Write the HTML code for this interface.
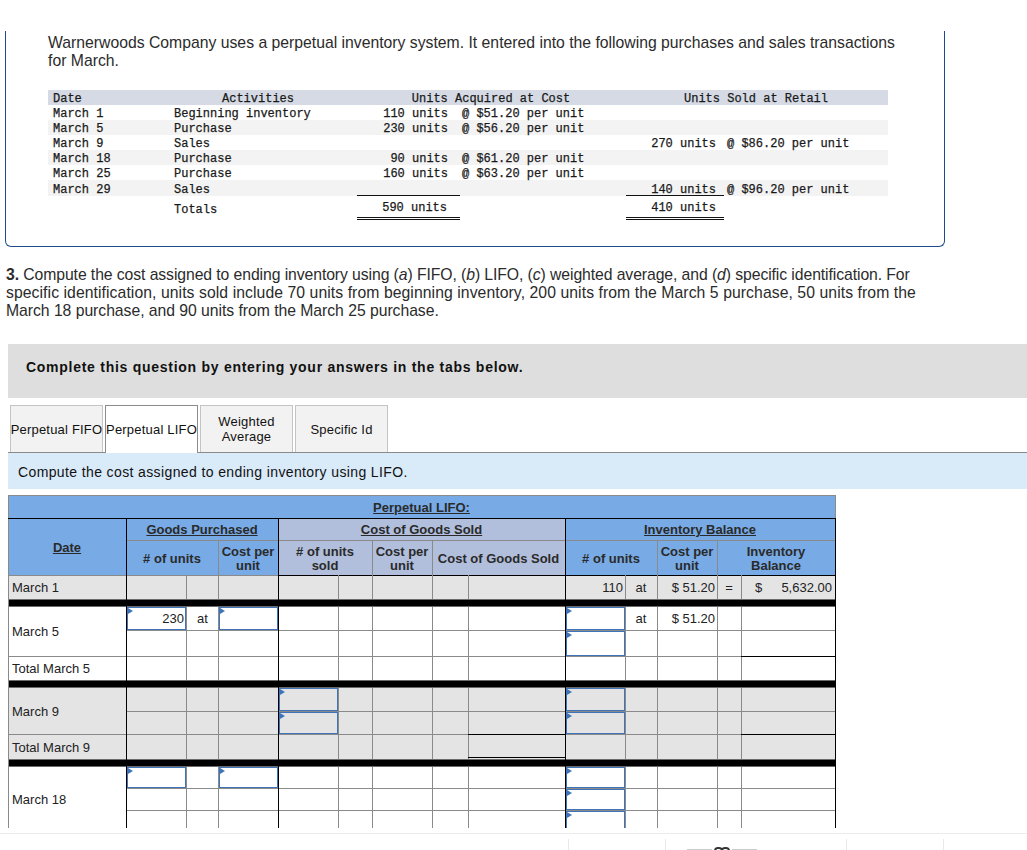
<!DOCTYPE html>
<html><head><meta charset="utf-8"><style>
*{margin:0;padding:0;box-sizing:border-box}
html,body{width:1027px;height:850px;overflow:hidden;background:#fff}
body{position:relative}
div,span{position:absolute}
span{white-space:nowrap}
.p{font-family:"Liberation Sans",sans-serif;font-size:15.75px;line-height:18px;color:#2b2b2b}
.m{font-family:"Liberation Mono",monospace;font-size:12px;line-height:15px;color:#1a1a1a;-webkit-text-stroke:0.25px #1a1a1a}
.b{font-family:"Liberation Sans",sans-serif;font-size:14px;font-weight:bold;letter-spacing:0.73px;color:#111}
.tab{font-family:"Liberation Sans",sans-serif;font-size:13px;letter-spacing:0.2px;line-height:15px;color:#111;text-align:center}
.ins{font-family:"Liberation Sans",sans-serif;font-size:14px;letter-spacing:0.38px;color:#111}
.th{font-family:"Liberation Sans",sans-serif;font-size:13px;font-weight:bold;line-height:14px;color:#2a2a2a;text-align:center}
.u{text-decoration:underline}
.td{font-family:"Liberation Sans",sans-serif;font-size:13px;line-height:15px;color:#222}
</style></head>
<body>
<div style="left:5px;top:31px;width:940px;height:216px;border:1px solid #1d4b8b;border-top:none;border-radius:0 0 6px 6px"></div>
<span class="p" style="left:48px;top:33.5px;">Warnerwoods Company uses a perpetual inventory system. It entered into the following purchases and sales transactions</span>
<span class="p" style="left:48px;top:51.5px;">for March.</span>
<div style="left:48px;top:90px;width:840px;height:15px;background:#d5dae5"></div>
<div style="left:48px;top:120px;width:840px;height:15px;background:#f3f3f3"></div>
<div style="left:48px;top:150px;width:840px;height:15px;background:#f3f3f3"></div>
<div style="left:48px;top:180px;width:840px;height:16px;background:#f3f3f3"></div>
<span class="m" style="left:53px;top:92px">Date</span>
<span class="m" style="left:158px;top:92px;width:200px;text-align:center">Activities</span>
<span class="m" style="left:371px;top:92px;width:240px;text-align:center">Units Acquired at Cost</span>
<span class="m" style="left:636px;top:92px;width:240px;text-align:center">Units Sold at Retail</span>
<span class="m" style="left:53px;top:107px">March 1</span>
<span class="m" style="left:174px;top:107px">Beginning inventory</span>
<span class="m" style="left:348px;top:107px;width:100px;text-align:right">110 units</span>
<span class="m" style="left:462px;top:107px">@ $51.20 per unit</span>
<span class="m" style="left:53px;top:122px">March 5</span>
<span class="m" style="left:174px;top:122px">Purchase</span>
<span class="m" style="left:348px;top:122px;width:100px;text-align:right">230 units</span>
<span class="m" style="left:462px;top:122px">@ $56.20 per unit</span>
<span class="m" style="left:53px;top:137px">March 9</span>
<span class="m" style="left:174px;top:137px">Sales</span>
<span class="m" style="left:616px;top:137px;width:100px;text-align:right">270 units</span>
<span class="m" style="left:727px;top:137px">@ $86.20 per unit</span>
<span class="m" style="left:53px;top:152px">March 18</span>
<span class="m" style="left:174px;top:152px">Purchase</span>
<span class="m" style="left:348px;top:152px;width:100px;text-align:right">90 units</span>
<span class="m" style="left:462px;top:152px">@ $61.20 per unit</span>
<span class="m" style="left:53px;top:167px">March 25</span>
<span class="m" style="left:174px;top:167px">Purchase</span>
<span class="m" style="left:348px;top:167px;width:100px;text-align:right">160 units</span>
<span class="m" style="left:462px;top:167px">@ $63.20 per unit</span>
<span class="m" style="left:53px;top:183px">March 29</span>
<span class="m" style="left:174px;top:183px">Sales</span>
<span class="m" style="left:616px;top:183px;width:100px;text-align:right">140 units</span>
<span class="m" style="left:727px;top:183px">@ $96.20 per unit</span>
<span class="m" style="left:174px;top:203px">Totals</span>
<span class="m" style="left:347px;top:201px;width:100px;text-align:right">590 units</span>
<span class="m" style="left:616px;top:201px;width:100px;text-align:right">410 units</span>
<div style="left:357px;top:195px;width:103px;height:1px;background:#111"></div>
<div style="left:357px;top:217px;width:103px;height:1px;background:#111"></div>
<div style="left:357px;top:219px;width:103px;height:1px;background:#111"></div>
<div style="left:626px;top:195px;width:98px;height:1px;background:#111"></div>
<div style="left:626px;top:217px;width:98px;height:1px;background:#111"></div>
<div style="left:626px;top:219px;width:98px;height:1px;background:#111"></div>
<span class="p" style="left:6px;top:266px;letter-spacing:-0.084px"><b>3.</b> Compute the cost assigned to ending inventory using (<i>a</i>) FIFO, (<i>b</i>) LIFO, (<i>c</i>) weighted average, and (<i>d</i>) specific identification. For</span>
<span class="p" style="left:6px;top:284px;letter-spacing:0.07px">specific identification, units sold include 70 units from beginning inventory, 200 units from the March 5 purchase, 50 units from the</span>
<span class="p" style="left:6px;top:302px;letter-spacing:-0.04px">March 18 purchase, and 90 units from the March 25 purchase.</span>
<div style="left:8px;top:344px;width:1019px;height:54px;background:#dedede"></div>
<span class="b" style="left:26px;top:359px;">Complete this question by entering your answers in the tabs below.</span>
<div style="left:8px;top:452px;width:1020px;height:1px;background:#8a8a8a"></div>
<div style="left:10px;top:405px;width:93px;height:47px;background:#f2f2f2;border:1px solid #c4c4c4;border-bottom:none"></div>
<span class="tab" style="left:10px;top:422px;width:93px">Perpetual FIFO</span>
<div style="left:105px;top:405px;width:93px;height:49px;background:#fff;border:1px solid #8c8c8c;border-bottom:none"></div>
<span class="tab" style="left:105px;top:422px;width:93px">Perpetual LIFO</span>
<div style="left:200px;top:405px;width:93px;height:47px;background:#f2f2f2;border:1px solid #c4c4c4;border-bottom:none"></div>
<span class="tab" style="left:200px;top:413.5px;width:93px">Weighted<br>Average</span>
<div style="left:295px;top:405px;width:93px;height:47px;background:#f2f2f2;border:1px solid #c4c4c4;border-bottom:none"></div>
<span class="tab" style="left:295px;top:422px;width:93px">Specific Id</span>
<div style="left:8px;top:453px;width:1019px;height:36px;background:#d9eaf9"></div>
<span class="ins" style="left:18px;top:464px;">Compute the cost assigned to ending inventory using LIFO.</span>
<div style="left:8px;top:495px;width:827px;height:23px;background:#78aae6"></div>
<div style="left:8px;top:518px;width:270px;height:57px;background:#78aae6"></div>
<div style="left:278px;top:518px;width:287px;height:57px;background:#b1bfdc"></div>
<div style="left:565px;top:518px;width:270px;height:57px;background:#78aae6"></div>
<div style="left:8px;top:575px;width:827px;height:24px;background:#e4e4e4"></div>
<div style="left:8px;top:606px;width:827px;height:74px;background:#fff"></div>
<div style="left:8px;top:687px;width:827px;height:72px;background:#e4e4e4"></div>
<div style="left:8px;top:766px;width:827px;height:62px;background:#fff"></div>
<div style="left:8px;top:495px;width:828px;height:1px;background:#8a8a8a"></div>
<div style="left:8px;top:495px;width:1px;height:334px;background:#8a8a8a"></div>
<div style="left:835px;top:495px;width:1px;height:24px;background:#8a8a8a"></div>
<div style="left:835px;top:518px;width:1px;height:311px;background:#000"></div>
<div style="left:8px;top:518px;width:828px;height:1px;background:#000"></div>
<div style="left:126px;top:540px;width:710px;height:1px;background:#8a8a8a"></div>
<div style="left:8px;top:575px;width:271px;height:1px;background:#8a8a8a"></div>
<div style="left:278px;top:575px;width:558px;height:1px;background:#000"></div>
<div style="left:126px;top:518px;width:1px;height:311px;background:#000"></div>
<div style="left:278px;top:518px;width:1px;height:311px;background:#000"></div>
<div style="left:565px;top:518px;width:1px;height:311px;background:#000"></div>
<div style="left:218px;top:540px;width:1px;height:36px;background:#8a8a8a"></div>
<div style="left:372px;top:540px;width:1px;height:36px;background:#8a8a8a"></div>
<div style="left:432px;top:540px;width:1px;height:36px;background:#8a8a8a"></div>
<div style="left:657px;top:540px;width:1px;height:36px;background:#8a8a8a"></div>
<div style="left:717px;top:540px;width:1px;height:36px;background:#8a8a8a"></div>
<div style="left:186px;top:575px;width:1px;height:254px;background:#8a8a8a"></div>
<div style="left:218px;top:575px;width:1px;height:254px;background:#8a8a8a"></div>
<div style="left:338px;top:575px;width:1px;height:254px;background:#8a8a8a"></div>
<div style="left:372px;top:575px;width:1px;height:254px;background:#8a8a8a"></div>
<div style="left:432px;top:575px;width:1px;height:254px;background:#8a8a8a"></div>
<div style="left:468px;top:575px;width:1px;height:254px;background:#8a8a8a"></div>
<div style="left:625px;top:575px;width:1px;height:254px;background:#8a8a8a"></div>
<div style="left:657px;top:575px;width:1px;height:254px;background:#8a8a8a"></div>
<div style="left:717px;top:575px;width:1px;height:254px;background:#8a8a8a"></div>
<div style="left:741px;top:575px;width:1px;height:254px;background:#8a8a8a"></div>
<div style="left:9px;top:599px;width:827px;height:8px;background:#6a6a6a"></div>
<div style="left:9px;top:600px;width:827px;height:6px;background:#000"></div>
<div style="left:9px;top:680px;width:827px;height:8px;background:#6a6a6a"></div>
<div style="left:9px;top:681px;width:827px;height:6px;background:#000"></div>
<div style="left:9px;top:759px;width:827px;height:8px;background:#6a6a6a"></div>
<div style="left:9px;top:760px;width:827px;height:6px;background:#000"></div>
<div style="left:126px;top:630px;width:710px;height:1px;background:#8a8a8a"></div>
<div style="left:126px;top:711px;width:710px;height:1px;background:#8a8a8a"></div>
<div style="left:126px;top:788px;width:710px;height:1px;background:#8a8a8a"></div>
<div style="left:126px;top:810px;width:710px;height:1px;background:#8a8a8a"></div>
<div style="left:8px;top:656px;width:828px;height:1px;background:#8a8a8a"></div>
<div style="left:8px;top:734px;width:828px;height:1px;background:#8a8a8a"></div>
<div style="left:741px;top:656px;width:95px;height:1px;background:#000"></div>
<div style="left:741px;top:734px;width:95px;height:1px;background:#000"></div>
<div style="left:468px;top:734px;width:98px;height:1px;background:#000"></div>
<div style="left:468px;top:757px;width:98px;height:1px;background:#000"></div>
<div style="left:126px;top:518px;width:1px;height:311px;background:#000"></div>
<div style="left:278px;top:518px;width:1px;height:311px;background:#000"></div>
<div style="left:565px;top:518px;width:1px;height:311px;background:#000"></div>
<div style="left:835px;top:518px;width:1px;height:311px;background:#000"></div>
<span class="th u" style="left:8px;top:501px;width:827px;padding-left:0">Perpetual LIFO:</span>
<span class="th u" style="left:8px;top:541px;width:118px">Date</span>
<span class="th u" style="left:126px;top:523px;width:152px">Goods Purchased</span>
<span class="th u" style="left:278px;top:523px;width:287px">Cost of Goods Sold</span>
<span class="th u" style="left:565px;top:523px;width:270px">Inventory Balance</span>
<span class="th" style="left:126px;top:552px;width:92px"># of units</span>
<span class="th" style="left:218px;top:544.5px;width:60px">Cost per<br>unit</span>
<span class="th" style="left:278px;top:544.5px;width:94px"># of units<br>sold</span>
<span class="th" style="left:372px;top:544.5px;width:60px">Cost per<br>unit</span>
<span class="th" style="left:432px;top:552px;width:133px">Cost of Goods Sold</span>
<span class="th" style="left:565px;top:552px;width:92px"># of units</span>
<span class="th" style="left:657px;top:544.5px;width:60px">Cost per<br>unit</span>
<span class="th" style="left:717px;top:544.5px;width:118px">Inventory<br>Balance</span>
<span class="td" style="left:12px;top:580px;">March 1</span>
<span class="td" style="left:12px;top:624px;">March 5</span>
<span class="td" style="left:12px;top:661px;">Total March 5</span>
<span class="td" style="left:12px;top:704px;">March 9</span>
<span class="td" style="left:12px;top:740px;">Total March 9</span>
<span class="td" style="left:12px;top:792px;">March 18</span>
<div style="left:127px;top:607px;width:59px;height:23px;border:1px solid #3f75b8;background:transparent"></div>
<div style="left:128px;top:608px;width:0;height:0;border-top:3.5px solid transparent;border-bottom:3.5px solid transparent;border-left:5.5px solid #3f75b8"></div>
<span class="td" style="left:127px;top:611px;width:57px;text-align:right">230</span>
<div style="left:219px;top:607px;width:59px;height:23px;border:1px solid #3f75b8;background:transparent"></div>
<div style="left:220px;top:608px;width:0;height:0;border-top:3.5px solid transparent;border-bottom:3.5px solid transparent;border-left:5.5px solid #3f75b8"></div>
<div style="left:566px;top:607px;width:59px;height:23px;border:1px solid #3f75b8;background:transparent"></div>
<div style="left:567px;top:608px;width:0;height:0;border-top:3.5px solid transparent;border-bottom:3.5px solid transparent;border-left:5.5px solid #3f75b8"></div>
<div style="left:566px;top:631px;width:59px;height:25px;border:1px solid #3f75b8;background:transparent"></div>
<div style="left:567px;top:632px;width:0;height:0;border-top:3.5px solid transparent;border-bottom:3.5px solid transparent;border-left:5.5px solid #3f75b8"></div>
<div style="left:279px;top:688px;width:59px;height:23px;border:1px solid #3f75b8;background:transparent"></div>
<div style="left:280px;top:689px;width:0;height:0;border-top:3.5px solid transparent;border-bottom:3.5px solid transparent;border-left:5.5px solid #3f75b8"></div>
<div style="left:279px;top:712px;width:59px;height:22px;border:1px solid #3f75b8;background:transparent"></div>
<div style="left:280px;top:713px;width:0;height:0;border-top:3.5px solid transparent;border-bottom:3.5px solid transparent;border-left:5.5px solid #3f75b8"></div>
<div style="left:566px;top:688px;width:59px;height:23px;border:1px solid #3f75b8;background:transparent"></div>
<div style="left:567px;top:689px;width:0;height:0;border-top:3.5px solid transparent;border-bottom:3.5px solid transparent;border-left:5.5px solid #3f75b8"></div>
<div style="left:566px;top:712px;width:59px;height:22px;border:1px solid #3f75b8;background:transparent"></div>
<div style="left:567px;top:713px;width:0;height:0;border-top:3.5px solid transparent;border-bottom:3.5px solid transparent;border-left:5.5px solid #3f75b8"></div>
<div style="left:127px;top:767px;width:59px;height:21px;border:1px solid #3f75b8;background:transparent"></div>
<div style="left:128px;top:768px;width:0;height:0;border-top:3.5px solid transparent;border-bottom:3.5px solid transparent;border-left:5.5px solid #3f75b8"></div>
<div style="left:219px;top:767px;width:59px;height:21px;border:1px solid #3f75b8;background:transparent"></div>
<div style="left:220px;top:768px;width:0;height:0;border-top:3.5px solid transparent;border-bottom:3.5px solid transparent;border-left:5.5px solid #3f75b8"></div>
<div style="left:566px;top:767px;width:59px;height:21px;border:1px solid #3f75b8;background:transparent"></div>
<div style="left:567px;top:768px;width:0;height:0;border-top:3.5px solid transparent;border-bottom:3.5px solid transparent;border-left:5.5px solid #3f75b8"></div>
<div style="left:566px;top:789px;width:59px;height:21px;border:1px solid #3f75b8;background:transparent"></div>
<div style="left:567px;top:790px;width:0;height:0;border-top:3.5px solid transparent;border-bottom:3.5px solid transparent;border-left:5.5px solid #3f75b8"></div>
<div style="left:566px;top:811px;width:59px;height:30px;border:1px solid #3f75b8;background:transparent"></div>
<div style="left:567px;top:812px;width:0;height:0;border-top:3.5px solid transparent;border-bottom:3.5px solid transparent;border-left:5.5px solid #3f75b8"></div>
<span class="td" style="left:187px;top:611px;width:31px;text-align:center">at</span>
<span class="td" style="left:565px;top:580px;width:58px;text-align:right">110</span>
<span class="td" style="left:625px;top:580px;width:32px;text-align:center">at</span>
<span class="td" style="left:657px;top:580px;width:58px;text-align:right">$ 51.20</span>
<span class="td" style="left:717px;top:580px;width:24px;text-align:center">=</span>
<span class="td" style="left:743px;top:580px;width:31px;text-align:center">$</span>
<span class="td" style="left:741px;top:580px;width:91px;text-align:right">5,632.00</span>
<span class="td" style="left:625px;top:611px;width:32px;text-align:center">at</span>
<span class="td" style="left:657px;top:611px;width:58px;text-align:right">$ 51.20</span>
<div style="left:0px;top:828px;width:1027px;height:22px;background:#fff"></div>
<div style="left:0px;top:833px;width:1028px;height:1px;background:#ececec"></div>
<div style="left:568px;top:839px;width:1px;height:12px;background:#e8e8e8"></div>
<div style="left:665px;top:839px;width:1px;height:12px;background:#e8e8e8"></div>
<div style="left:846px;top:839px;width:1px;height:12px;background:#e8e8e8"></div>
<div style="left:943px;top:839px;width:1px;height:12px;background:#e8e8e8"></div>
<div style="left:687px;top:849px;width:25px;height:1px;background:#cccccc"></div>
<div style="left:732px;top:849px;width:25px;height:1px;background:#cccccc"></div>
<div style="left:714px;top:847px;width:9px;height:9px;border:2px solid #333;border-radius:4px"></div>
<div style="left:721px;top:847px;width:9px;height:9px;border:2px solid #333;border-radius:4px"></div>
</body></html>
